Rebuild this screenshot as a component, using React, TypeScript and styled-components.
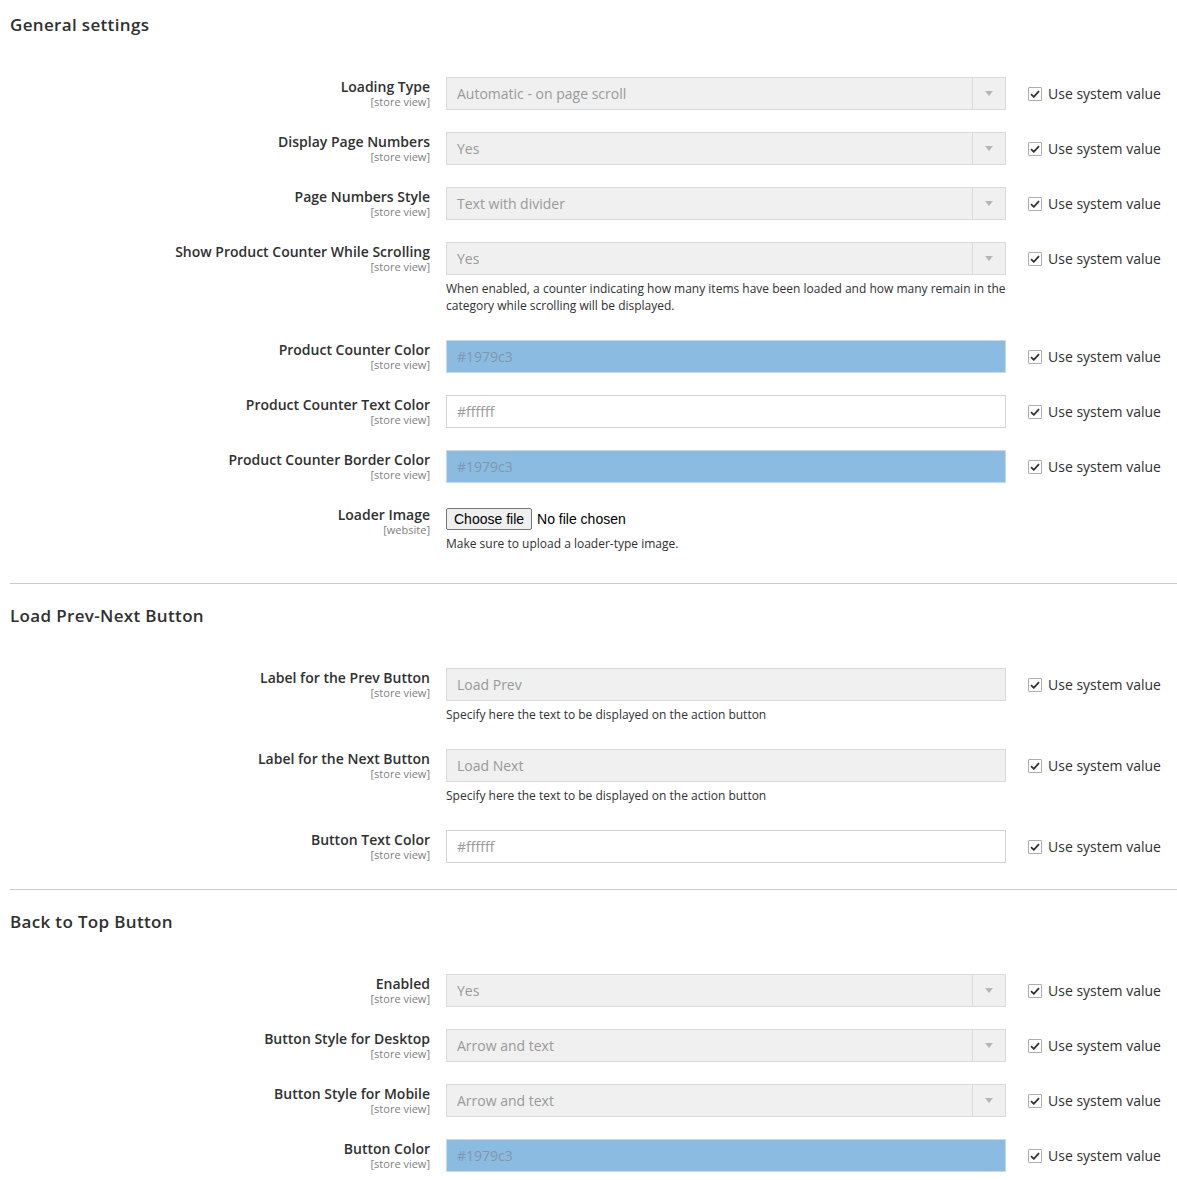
import React from 'react';
import styled, { createGlobalStyle } from 'styled-components';

const GlobalStyle = createGlobalStyle`
  html, body {
    margin: 0;
    padding: 0;
    background: #ffffff;
  }
  body {
    font-family: "Open Sans", "Liberation Sans", sans-serif;
    color: #303030;
  }
`;

const Page = styled.div`
  width: 1177px;
  padding-left: 10px;
  box-sizing: border-box;
`;

const Section = styled.section<{ $first?: boolean; $last?: boolean }>`
  padding-top: ${p => (p.$first ? '15px' : '22px')};
  padding-bottom: ${p => (p.$first ? '27px' : '26px')};
  border-bottom: ${p => (p.$last ? 'none' : '1px solid #cccccc')};
`;

const SectionTitle = styled.h2`
  margin: 0 0 42px;
  font-size: 17px;
  line-height: 20px;
  font-weight: 600;
  letter-spacing: 0.02em;
  color: #303030;
`;

const Rows = styled.div`
  display: flex;
  flex-direction: column;
  gap: 22px;
`;

const Row = styled.div`
  display: grid;
  grid-template-columns: 420px 560px 1fr;
  column-gap: 16px;
  align-items: start;
`;

const LabelCell = styled.div`
  text-align: right;
  padding-top: 1px;
`;

const LabelText = styled.div`
  font-size: 14px;
  line-height: 17px;
  font-weight: 600;
  color: #303030;
`;

const Scope = styled.div`
  font-size: 11px;
  line-height: 13px;
  color: #808080;
`;

const FieldCell = styled.div`
  display: flex;
  flex-direction: column;
`;

const SelectBox = styled.div`
  height: 33px;
  box-sizing: border-box;
  border: 1px solid #dadada;
  background: #f0f0f0;
  display: flex;
  align-items: center;
`;

const SelectValue = styled.span`
  flex: 1;
  padding-left: 10px;
  font-size: 14px;
  color: #999999;
`;

const ArrowArea = styled.span`
  width: 32px;
  align-self: stretch;
  border-left: 1px solid #dadada;
  display: flex;
  align-items: center;
  justify-content: center;
`;

const Arrow = styled.span`
  width: 0;
  height: 0;
  border-left: 4px solid transparent;
  border-right: 4px solid transparent;
  border-top: 5px solid #b5b5b5;
`;

const TextBox = styled.div<{ $variant: 'disabled' | 'white' | 'color' }>`
  height: 33px;
  box-sizing: border-box;
  display: flex;
  align-items: center;
  padding-left: 10px;
  font-size: 14px;
  border: 1px solid
    ${p => (p.$variant === 'white' ? '#d4d4d4' : p.$variant === 'color' ? '#c9d9e6' : '#dadada')};
  background: ${p =>
    p.$variant === 'white' ? '#ffffff' : p.$variant === 'color' ? '#8cbbe1' : '#f0f0f0'};
  color: ${p => (p.$variant === 'color' ? '#7f97ad' : '#999999')};
`;

const Note = styled.div`
  margin: 5px 0 4px;
  font-size: 12px;
  line-height: 17px;
  color: #303030;
`;

const FileLine = styled.div`
  display: flex;
  align-items: center;
  gap: 5px;
  margin-top: 3px;
  font-family: "Liberation Sans", Arial, sans-serif;
  font-size: 14px;
  color: #000000;
`;

const FileButton = styled.button`
  height: 22px;
  box-sizing: border-box;
  padding: 0 7px;
  font-family: "Liberation Sans", Arial, sans-serif;
  font-size: 14px;
  line-height: 20px;
  color: #000000;
  background: #efefef;
  border: 1px solid #767676;
  border-radius: 2px;
`;

const SystemCell = styled.label`
  display: flex;
  align-items: center;
  gap: 6px;
  height: 33px;
  padding-left: 6px;
  font-size: 14px;
  color: #303030;
`;

const Check = styled.span`
  width: 14px;
  height: 14px;
  box-sizing: border-box;
  border: 1px solid #adadad;
  border-radius: 1px;
  background: #fff;
  display: flex;
  align-items: center;
  justify-content: center;
`;

type Field =
  | { kind: 'select'; value: string }
  | { kind: 'text'; value: string; variant: 'disabled' | 'white' | 'color' }
  | { kind: 'file' };

interface Setting {
  label: string;
  scope: string;
  field: Field;
  note?: string;
  system?: boolean;
}

const CheckMark = () => (
  <svg width="10" height="8" viewBox="0 0 10 8">
    <path d="M1 4.2 L3.8 6.8 L9 1.2" fill="none" stroke="#303030" strokeWidth="1.8" />
  </svg>
);

const FieldControl = ({ field }: { field: Field }) => {
  if (field.kind === 'select') {
    return (
      <SelectBox>
        <SelectValue>{field.value}</SelectValue>
        <ArrowArea>
          <Arrow />
        </ArrowArea>
      </SelectBox>
    );
  }
  if (field.kind === 'file') {
    return (
      <FileLine>
        <FileButton type="button">Choose file</FileButton>
        <span>No file chosen</span>
      </FileLine>
    );
  }
  return <TextBox $variant={field.variant}>{field.value}</TextBox>;
};

const SettingRow = ({ setting }: { setting: Setting }) => (
  <Row>
    <LabelCell>
      <LabelText>{setting.label}</LabelText>
      <Scope>{setting.scope}</Scope>
    </LabelCell>
    <FieldCell>
      <FieldControl field={setting.field} />
      {setting.note && <Note>{setting.note}</Note>}
    </FieldCell>
    {setting.system !== false ? (
      <SystemCell>
        <Check>
          <CheckMark />
        </Check>
        Use system value
      </SystemCell>
    ) : (
      <div />
    )}
  </Row>
);

const sv = '[store view]';

const sections: { title: string; settings: Setting[] }[] = [
  {
    title: 'General settings',
    settings: [
      { label: 'Loading Type', scope: sv, field: { kind: 'select', value: 'Automatic - on page scroll' } },
      { label: 'Display Page Numbers', scope: sv, field: { kind: 'select', value: 'Yes' } },
      { label: 'Page Numbers Style', scope: sv, field: { kind: 'select', value: 'Text with divider' } },
      {
        label: 'Show Product Counter While Scrolling',
        scope: sv,
        field: { kind: 'select', value: 'Yes' },
        note:
          'When enabled, a counter indicating how many items have been loaded and how many remain in the category while scrolling will be displayed.',
      },
      { label: 'Product Counter Color', scope: sv, field: { kind: 'text', value: '#1979c3', variant: 'color' } },
      { label: 'Product Counter Text Color', scope: sv, field: { kind: 'text', value: '#ffffff', variant: 'white' } },
      { label: 'Product Counter Border Color', scope: sv, field: { kind: 'text', value: '#1979c3', variant: 'color' } },
      {
        label: 'Loader Image',
        scope: '[website]',
        field: { kind: 'file' },
        note: 'Make sure to upload a loader-type image.',
        system: false,
      },
    ],
  },
  {
    title: 'Load Prev-Next Button',
    settings: [
      {
        label: 'Label for the Prev Button',
        scope: sv,
        field: { kind: 'text', value: 'Load Prev', variant: 'disabled' },
        note: 'Specify here the text to be displayed on the action button',
      },
      {
        label: 'Label for the Next Button',
        scope: sv,
        field: { kind: 'text', value: 'Load Next', variant: 'disabled' },
        note: 'Specify here the text to be displayed on the action button',
      },
      { label: 'Button Text Color', scope: sv, field: { kind: 'text', value: '#ffffff', variant: 'white' } },
    ],
  },
  {
    title: 'Back to Top Button',
    settings: [
      { label: 'Enabled', scope: sv, field: { kind: 'select', value: 'Yes' } },
      { label: 'Button Style for Desktop', scope: sv, field: { kind: 'select', value: 'Arrow and text' } },
      { label: 'Button Style for Mobile', scope: sv, field: { kind: 'select', value: 'Arrow and text' } },
      { label: 'Button Color', scope: sv, field: { kind: 'text', value: '#1979c3', variant: 'color' } },
    ],
  },
];

export default function App() {
  return (
    <>
      <GlobalStyle />
      <Page>
        {sections.map((section, i) => (
          <Section key={section.title} $first={i === 0} $last={i === sections.length - 1}>
            <SectionTitle>{section.title}</SectionTitle>
            <Rows>
              {section.settings.map(s => (
                <SettingRow key={s.label} setting={s} />
              ))}
            </Rows>
          </Section>
        ))}
      </Page>
    </>
  );
}
